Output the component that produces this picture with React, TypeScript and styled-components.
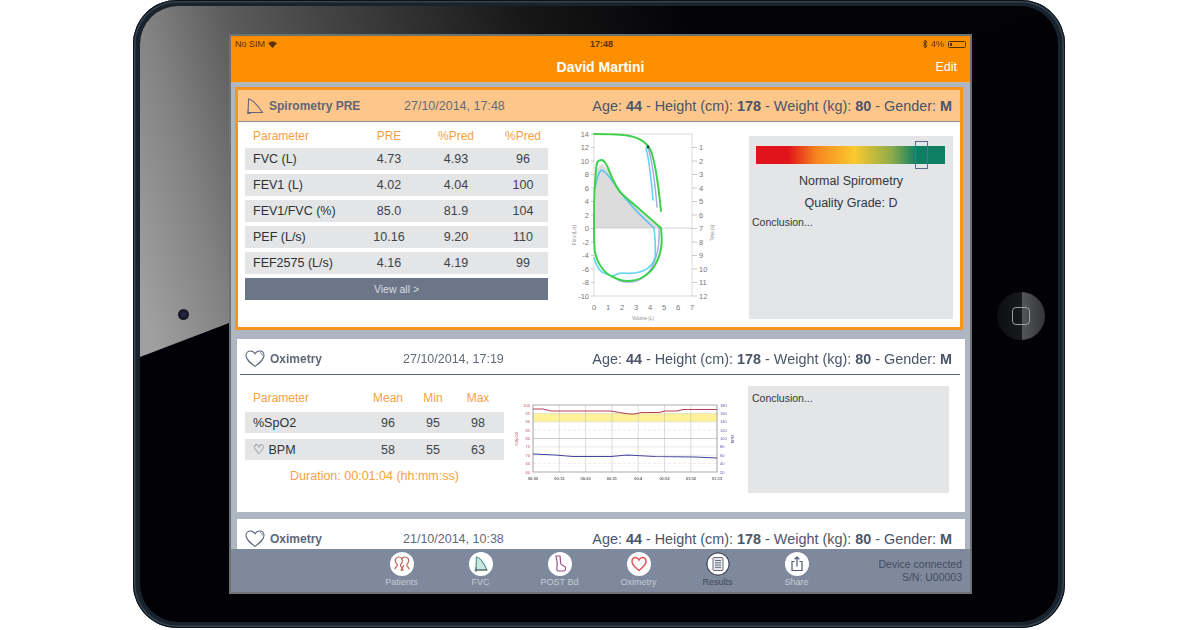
import React from "react"
import styled, { createGlobalStyle } from "styled-components"

const spiroRows = [
  ["FVC (L)", "4.73", "4.93", "96"],
  ["FEV1 (L)", "4.02", "4.04", "100"],
  ["FEV1/FVC (%)", "85.0", "81.9", "104"],
  ["PEF (L/s)", "10.16", "9.20", "110"],
  ["FEF2575 (L/s)", "4.16", "4.19", "99"],
]

const oxiRows = [
  ["%SpO2", "96", "95", "98"],
  ["♡ BPM", "58", "55", "63"],
]

const flowTicks = [14, 12, 10, 8, 6, 4, 2, 0, -2, -4, -6, -8, -10]
const timeTicks = [1, 2, 3, 4, 5, 6, 7, 8, 9, 10, 11, 12]
const volTicks = [0, 1, 2, 3, 4, 5, 6, 7]
const spoTicks = [100, 95, 90, 85, 80, 75, 70, 65, 60]
const bpmTicks = [180, 160, 140, 120, 100, 80, 60, 40, 20]
const clockTicks = ["00:00", "00:12", "00:20", "00:31", "00:4", "00:52", "01:02", "01:13"]

//icons
const SpiroIcon = () => (
  <svg width="18" height="18" viewBox="0 0 18 18" fill="none" stroke="#5d6678" strokeWidth="1.1">
    <path d="M2 15.5 L2.6 2 C6 2.4 10 6 16.5 15.5 Z" />
    <path d="M1 16.5 H5 M2 13 V17" strokeWidth="0.8" />
  </svg>
)

const HeartIcon = () => (
  <svg width="20" height="18" viewBox="0 0 20 18" fill="none" stroke="#5d6678" strokeWidth="1.1">
    <path d="M10 16.5 C5 12.5 1 9.5 1 5.6 C1 2.8 3.2 1 5.5 1 C7.5 1 9 2 10 3.8 C11 2 12.6 1 14.5 1 C17 1 19 2.8 19 5.6 C19 9.5 15 12.5 10 16.5 Z" />
    <path d="M15 2.6 C16.4 3 17.3 4.2 17.3 5.6" strokeWidth="0.8" />
  </svg>
)

const PatientsGlyph = () => (
  <svg width="20" height="20" viewBox="0 0 20 20" fill="none" stroke="#c9645e" strokeWidth="1.2">
    <path d="M7 3 C4.4 3 3 5 3.4 7.4 C3.7 9.2 5 10 5.4 11 C5.6 12.4 3.2 13 2.6 15.4" />
    <path d="M7 3 C9.4 3 10.8 5 10.4 7.4 C10.1 9.2 8.8 10 8.4 11 C8.3 12.6 10.6 13.4 11.2 17" />
    <path d="M13 3 C10.9 3 9.8 4.4 9.8 5.6 M13 3 C15.6 3 17 5 16.6 7.4 C16.3 9.2 15 10 14.6 11 C14.5 12.4 16.8 13 17.4 15.4" />
    <path d="M11.6 11 C11.8 12.4 10 13.4 9 17" />
  </svg>
)

const FvcGlyph = () => (
  <svg width="20" height="20" viewBox="0 0 20 20" fill="none">
    <path d="M5 16 L5.4 3 C9 3.6 12.5 8 16 16 Z" fill="#c9e6df" stroke="#4b8f86" strokeWidth="1.1" />
    <path d="M3.5 16 H16 M5 13 V18" stroke="#4d5a60" strokeWidth="0.9" />
  </svg>
)

const PostGlyph = () => (
  <svg width="20" height="20" viewBox="0 0 20 20" fill="none" stroke="#9b4f8f" strokeWidth="1.2">
    <path d="M6 2 H10 C10.6 5 10 7.5 11 10 C12 11.5 15 11.6 15.5 13.6 C15.8 15.4 15 17 13.4 17 H8.4 C7.4 17 6.8 16.2 6.8 15 C7 11 7.6 9 6.8 6.6 Z" />
  </svg>
)

const OxiGlyph = () => (
  <svg width="20" height="20" viewBox="0 0 20 20" fill="none" stroke="#e0565b" strokeWidth="1.5">
    <path d="M10 16.5 C6 13.5 3 11 3 7.6 C3 5 4.8 3.6 6.6 3.6 C8.2 3.6 9.3 4.6 10 6 C10.7 4.6 11.9 3.6 13.4 3.6 C15.3 3.6 17 5 17 7.6 C17 11 14 13.5 10 16.5 Z" />
  </svg>
)

const ResultsGlyph = () => (
  <svg width="20" height="20" viewBox="0 0 20 20" fill="none" stroke="#666c78" strokeWidth="1">
    <rect x="5" y="3.5" width="10" height="13" rx="1" fill="#e6e7ea" />
    <path d="M7 6.5 H13 M7 8.8 H13 M7 11 H13 M7 13.3 H13" />
  </svg>
)

const ShareGlyph = () => (
  <svg width="20" height="20" viewBox="0 0 20 20" fill="none" stroke="#4e5a70" strokeWidth="1.2">
    <path d="M7.5 7.5 H5 V16.5 H15 V7.5 H12.5" />
    <path d="M10 12.5 V3 M7.6 5.2 L10 3 L12.4 5.2" />
  </svg>
)

const tabs = [
  { label: "Patients", glyph: <PatientsGlyph /> },
  { label: "FVC", glyph: <FvcGlyph /> },
  { label: "POST Bd", glyph: <PostGlyph /> },
  { label: "Oximetry", glyph: <OxiGlyph /> },
  { label: "Results", glyph: <ResultsGlyph />, active: true },
  { label: "Share", glyph: <ShareGlyph /> },
]

const FlowVolumeChart = () => (
  <svg width="150" height="200" viewBox="0 0 150 200" fontFamily="'Liberation Sans', sans-serif">
    <path d="M25 103 L26 50 C27 44 30 40 32 39 C36 42 40 48 44 56 C54 72 72 90 90 103 Z" fill="#dcdcdc" />
    <rect x="24" y="9" width="98" height="162" fill="none" stroke="#d2d2d2" strokeWidth="0.8" />
    <path d="M24 103 H122" stroke="#c8c8c8" strokeWidth="0.8" />
    {flowTicks.map((v, i) => (
      <g key={v}>
        <path d={`M21 ${9 + i * 13.5} H24`} stroke="#aaa" strokeWidth="0.6" />
        <text x="19" y={11.5 + i * 13.5} fontSize="7.5" fill="#777" textAnchor="end">{v}</text>
      </g>
    ))}
    {timeTicks.map((v, i) => (
      <g key={v}>
        <path d={`M122 ${22.5 + i * 13.5} H127`} stroke="#aaa" strokeWidth="0.6" />
        <text x="129" y={25 + i * 13.5} fontSize="7.5" fill="#777">{v}</text>
      </g>
    ))}
    {volTicks.map((v, i) => (
      <text key={v} x={24 + i * 14} y="185" fontSize="7.5" fill="#777" textAnchor="middle">{v}</text>
    ))}
    <text x="73" y="195" fontSize="4.5" fill="#888" textAnchor="middle">Volume (L)</text>
    <text x="0" y="0" fontSize="4.5" fill="#888" textAnchor="middle" transform="translate(6 110) rotate(-90)">Flow (L/s)</text>
    <text x="0" y="0" fontSize="4.5" fill="#888" textAnchor="middle" transform="translate(144 108) rotate(-90)">Time (s)</text>
    <g fill="none" strokeLinecap="round">
      <path d="M76 23 C79 34 81 52 83 75" stroke="#62d6ef" strokeWidth="1.6" />
      <path d="M24 133 C26 140 28 144 32 147 C36 149 40 151 43 151 C46 150 47 148 52 148 C56 148 60 149 65 148 C70 147 75 146 78 143 C82 140 84 137 85 132 C86 122 85 112 84 103" stroke="#62d6ef" strokeWidth="1.6" />
      <path d="M25 63 C27 52 29 46 32 45 C38 48 42 56 48 64 C58 78 72 92 84 103" stroke="#62c0f0" strokeWidth="1.6" />
      <path d="M78 23 C82 34 85 58 87 82" stroke="#a9a4ee" strokeWidth="1.4" />
      <path d="M89 103 C90 122 86 142 74 152 C66 158 56 158 48 155" stroke="#a9a4ee" strokeWidth="1.4" />
      <path d="M24 9 C38 9 50 9 60 11 C70 13 76 17 80 24 C85 34 88 56 91 86" stroke="#3ed24b" strokeWidth="2" />
      <path d="M24 103 C24 85 24 70 25 60 C25.5 50 26 42 27 38 C28 35 30 35 32 35 C36 36 38 43 40 48 C43 55 46 62 50 67 C55 72 61 77 67 82 C75 89 84 97 91 103" stroke="#3ed24b" strokeWidth="2" />
      <path d="M91 103 C92 112 92 118 91 123 C90 130 88 135 85 140 C82 146 78 149 73 152 C68 155 62 156 57 156 C52 156 47 154 43 152 C38 150 35 147 32 143 C28 138 26 132 25 127 C24 120 24 110 24 103" stroke="#3ed24b" strokeWidth="2" />
    </g>
    <circle cx="78" cy="22" r="1.4" fill="#333" />
  </svg>
)

const TrendChart = () => (
  <svg width="222" height="85" viewBox="0 0 222 85" fontFamily="'Liberation Sans', sans-serif">
    <rect x="18" y="13" width="184" height="9" fill="#fdf29a" />
    {spoTicks.map((v, i) => (
      <g key={v}>
        <path d={`M18 ${5 + i * 8.375} H202`} stroke={i === 4 ? "#aaa" : "#ddd"} strokeWidth="0.6" strokeDasharray={i === 3 || i === 7 ? "3 2" : undefined} />
        <text x="15" y={6.5 + i * 8.375} fontSize="4" fill="#c0505a" textAnchor="end">{v}</text>
      </g>
    ))}
    {bpmTicks.map((v, i) => (
      <text key={v} x="205" y={6.5 + i * 8.375} fontSize="4" fill="#5a5aa8">{v}</text>
    ))}
    {clockTicks.map((v, i) => (
      <g key={v}>
        <path d={`M${18 + i * 26.3} 5 V72`} stroke="#bbb" strokeWidth="0.5" />
        <text x={18 + i * 26.3} y="80" fontSize="4" fontWeight="700" fill="#666" textAnchor="middle">{v}</text>
      </g>
    ))}
    <rect x="18" y="5" width="184" height="67" fill="none" stroke="#999" strokeWidth="0.7" />
    <path d="M18 9 H28 L36 11 H96 L104 12.5 L114 14 H120 L126 12.5 H144 L150 11 H162 L168 9.5 H202" fill="none" stroke="#b5455a" strokeWidth="1.2" />
    <path d="M18 54 L40 55 L58 56.5 H96 L112 55 L140 56.5 L180 57 L202 58" fill="none" stroke="#45459f" strokeWidth="1.2" />
    <text x="0" y="0" fontSize="4" fill="#c0505a" textAnchor="middle" transform="translate(3 39) rotate(-90)">%SpO2</text>
    <text x="0" y="0" fontSize="4" fill="#5a5aa8" textAnchor="middle" transform="translate(219 39) rotate(-90)">BPM</text>
  </svg>
)

const PatientInfo = () => (
  <Info>
    Age: <b>44</b> - Height (cm): <b>178</b> - Weight (kg): <b>80</b> - Gender: <b>M</b>
  </Info>
)

const App = () => {
  return (
    <Page>
      <GlobalStyle />
      <Tablet>
        <Bezel>
          <CameraSlot>
            <Camera />
          </CameraSlot>
          <Screen>
            <StatusBar>
              <span>No SIM</span>
              <WifiIcon viewBox="0 0 10 8" fill="#5a3000">
                <path d="M5 8 L0 2.6 C3 0 7 0 10 2.6 Z" />
              </WifiIcon>
              <Clock>17:48</Clock>
              <BluetoothIcon viewBox="0 0 6 10" fill="none" stroke="#4a2800" strokeWidth="0.9">
                <path d="M1 2.6 L5 6.8 L3 9 V1 L5 3.2 L1 7.4" />
              </BluetoothIcon>
              <span>4%</span>
              <Battery />
            </StatusBar>
            <NavBar>
              <NavTitle>David Martini</NavTitle>
              <EditLink>Edit</EditLink>
            </NavBar>

            <List>
              <Card $selected>
                <CardHeader $selected>
                  <TitleBlock>
                    <SpiroIcon />
                    <CardTitle>Spirometry PRE</CardTitle>
                  </TitleBlock>
                  <DateText>27/10/2014, 17:48</DateText>
                  <PatientInfo />
                </CardHeader>
                <SpiroBody>
                  <div>
                    <HeadRow $cols="119px 50px 84px 50px" $height={26} $top={7}>
                      <span>Parameter</span>
                      <span>PRE</span>
                      <span>%Pred</span>
                      <span>%Pred</span>
                    </HeadRow>
                    <Rows $gap={4}>
                      {spiroRows.map((row) => (
                        <Row key={row[0]} $cols="119px 50px 84px 50px" $height={22}>
                          {row.map((cell, i) => (
                            <span key={i}>{cell}</span>
                          ))}
                        </Row>
                      ))}
                      <ViewAll>View all &gt;</ViewAll>
                    </Rows>
                  </div>
                  <ChartSlot>
                    <FlowVolumeChart />
                  </ChartSlot>
                  <ResultPanel>
                    <GradeBar>
                      <GradeMarker />
                    </GradeBar>
                    <ResultLine>Normal Spirometry</ResultLine>
                    <ResultLine>Quality Grade: D</ResultLine>
                    <Conclusion>Conclusion...</Conclusion>
                  </ResultPanel>
                </SpiroBody>
              </Card>

              <Card>
                <CardHeader>
                  <TitleBlock>
                    <HeartIcon />
                    <CardTitle>Oximetry</CardTitle>
                  </TitleBlock>
                  <DateText>27/10/2014, 17:19</DateText>
                  <PatientInfo />
                </CardHeader>
                <OxiBody>
                  <div>
                    <HeadRow $cols="117px 52px 38px 52px" $height={37} $top={16}>
                      <span>Parameter</span>
                      <span>Mean</span>
                      <span>Min</span>
                      <span>Max</span>
                    </HeadRow>
                    <Rows $gap={6}>
                      {oxiRows.map((row) => (
                        <Row key={row[0]} $cols="117px 52px 38px 52px" $height={21}>
                          {row.map((cell, i) => (
                            <span key={i}>{cell}</span>
                          ))}
                        </Row>
                      ))}
                    </Rows>
                    <Duration>Duration: 00:01:04 (hh:mm:ss)</Duration>
                  </div>
                  <TrendSlot>
                    <TrendChart />
                  </TrendSlot>
                  <NotePanel>
                    <Conclusion>Conclusion...</Conclusion>
                  </NotePanel>
                </OxiBody>
              </Card>

              <Card>
                <CardHeader>
                  <TitleBlock>
                    <HeartIcon />
                    <CardTitle>Oximetry</CardTitle>
                  </TitleBlock>
                  <DateText>21/10/2014, 10:38</DateText>
                  <PatientInfo />
                </CardHeader>
              </Card>
            </List>

            <TabBar>
              {tabs.map((tab) => (
                <Tab key={tab.label} $active={tab.active}>
                  <TabIcon $active={tab.active}>{tab.glyph}</TabIcon>
                  <span>{tab.label}</span>
                </Tab>
              ))}
              <DeviceStatus>
                Device connected
                <br />
                S/N: U00003
              </DeviceStatus>
            </TabBar>
          </Screen>
          <HomeSlot>
            <HomeButton>
              <HomeSquare />
            </HomeButton>
          </HomeSlot>
        </Bezel>
      </Tablet>
    </Page>
  )
}

const GlobalStyle = createGlobalStyle`
  html, body {
    margin: 0;
    padding: 0;
    background: #fff;
  }

  * {
    box-sizing: border-box;
  }
`

const Page = styled.div`
  width: 1200px;
  height: 630px;
  padding-left: 133px;
  overflow: hidden;
  font-family: "Liberation Sans", Arial, sans-serif;
`

const Tablet = styled.div`
  width: 932px;
  height: 628px;
  padding: 6px 7px 6px 7px;
  border-radius: 44px;
  background: #18232d;
  box-shadow: inset 0 0 0 1px #0b1219, inset 0 0 0 2.5px #36424e;
`

const Bezel = styled.div`
  position: relative;
  height: 616px;
  display: grid;
  grid-template-columns: 91px 739px 88px;
  align-items: center;
  border-radius: 38px;
  background: #020206;
  overflow: hidden;

  /* glare across the glass */
  &::before {
    content: "";
    position: absolute;
    inset: 0;
    background: linear-gradient(
      75deg,
      #a0a0a0 8%,
      #808080 16%,
      #5c5c5c 23%,
      #444444 32%,
      #161616 51%,
      #030307 66%
    );
    clip-path: polygon(0 0, 100% 0, 100% 0, 0 351px);
  }
`

const CameraSlot = styled.div`
  position: relative;
  display: flex;
  justify-content: center;
  padding-right: 5px;
`

const Camera = styled.div`
  width: 11px;
  height: 11px;
  border-radius: 50%;
  background: radial-gradient(circle, #2c2c58 0%, #15151f 60%, #3a3a3a 100%);
`

const HomeSlot = styled.div`
  display: flex;
  justify-content: center;
  padding-left: 14px;
`

const HomeButton = styled.div`
  width: 48px;
  height: 48px;
  margin-top: 3px;
  display: flex;
  align-items: center;
  justify-content: center;
  border-radius: 50%;
  background: linear-gradient(90deg, #0d0e10 0%, #191a1c 52%, #555658 52%, #333437 100%);
`

const HomeSquare = styled.div`
  width: 18px;
  height: 18px;
  border: 1.5px solid #9c9ea2;
  border-radius: 4px;
`

const Screen = styled.div`
  position: relative;
  width: 739px;
  height: 556px;
  display: flex;
  flex-direction: column;
  overflow: hidden;
  box-shadow: 0 0 0 2px #6e7175;
  filter: blur(0.3px);
`

const StatusBar = styled.div`
  height: 16px;
  flex: none;
  display: flex;
  align-items: center;
  gap: 3px;
  padding: 0 4px;
  background: #fb8f00;
  color: #5a3000;
  font-size: 9px;
`

const WifiIcon = styled.svg`
  width: 9px;
  height: 7px;
`

const BluetoothIcon = styled.svg`
  width: 6px;
  height: 10px;
`

const Clock = styled.span`
  margin: 0 auto;
  padding-left: 4px;
  font-weight: 700;
`

const Battery = styled.div`
  position: relative;
  width: 18px;
  height: 7px;
  margin-left: 1px;
  border: 1px solid #5a3000;
  border-radius: 1.5px;

  &::before {
    content: "";
    position: absolute;
    left: 1px;
    top: 1px;
    bottom: 1px;
    width: 2px;
    background: #5a3000;
  }
`

const NavBar = styled.div`
  height: 31px;
  flex: none;
  position: relative;
  display: flex;
  align-items: center;
  justify-content: center;
  background: #fb8f00;
  color: #fff;
  border-bottom: 1px solid #c2b8a8;
`

const NavTitle = styled.div`
  font-size: 14px;
  font-weight: 700;
`

const EditLink = styled.div`
  position: absolute;
  right: 13px;
  top: 8px;
  font-size: 12.5px;
`

const List = styled.div`
  flex: 1;
  min-height: 0;
  display: flex;
  flex-direction: column;
  gap: 7px;
  padding-top: 4px;
  background: #aeb6c2;
  overflow: hidden;
`

const Card = styled.div<{ $selected?: boolean }>`
  flex: none;
  width: 728px;
  margin-left: ${(p) => (p.$selected ? "4px" : "6px")};
  margin-bottom: ${(p) => (p.$selected ? "2px" : "0")};
  background: #fff;
  border: ${(p) => (p.$selected ? "3px solid #f79420" : "none")};
`

const CardHeader = styled.div<{ $selected?: boolean }>`
  position: relative;
  display: flex;
  align-items: center;
  height: ${(p) => (p.$selected ? "32px" : "36px")};
  padding: ${(p) => (p.$selected ? "0 8px" : "3px 13px 0 8px")};
  background: ${(p) => (p.$selected ? "#fdc78c" : "#fff")};
  box-shadow: ${(p) => (p.$selected ? "inset 0 -1px 0 #8b8f98" : "none")};

  /* rule under an unselected header stops short of the card edges */
  &::after {
    content: ${(p) => (p.$selected ? "none" : '""')};
    position: absolute;
    left: 3px;
    right: 5px;
    bottom: 0;
    height: 1px;
    background: #5d6880;
  }
`

const TitleBlock = styled.div`
  width: 158px;
  display: flex;
  align-items: center;
  gap: 5px;
`

const CardTitle = styled.div`
  font-size: 12px;
  font-weight: 700;
  color: #5f6778;
`

const DateText = styled.div`
  font-size: 12.5px;
  color: #626a79;
`

const Info = styled.div`
  margin-left: auto;
  font-size: 14.4px;
  color: #4c5568;
`

const SpiroBody = styled.div`
  display: grid;
  grid-template-columns: 303px 172px 233px;
  padding-left: 7px;
  height: 205px;
`

const OxiBody = styled.div`
  display: grid;
  grid-template-columns: 259px 244px 201px;
  padding-left: 8px;
  height: 137px;
`

const HeadRow = styled.div<{ $cols: string; $height: number; $top: number }>`
  display: grid;
  grid-template-columns: ${(p) => p.$cols};
  height: ${(p) => p.$height}px;
  padding-top: ${(p) => p.$top}px;
  font-size: 12px;
  color: #f8a13f;
  text-align: center;

  span:first-child {
    padding-left: 8px;
    text-align: left;
  }
`

const Rows = styled.div<{ $gap: number }>`
  display: flex;
  flex-direction: column;
  gap: ${(p) => p.$gap}px;
`

const Row = styled.div<{ $cols: string; $height: number }>`
  display: grid;
  grid-template-columns: ${(p) => p.$cols};
  align-items: center;
  height: ${(p) => p.$height}px;
  background: #e3e5e6;
  font-size: 12.5px;
  color: #3f4349;
  text-align: center;

  span:first-child {
    padding-left: 8px;
    text-align: left;
    white-space: nowrap;
    color: #2e3136;
  }
`

const ViewAll = styled.div`
  height: 22px;
  display: flex;
  align-items: center;
  justify-content: center;
  background: #6d7689;
  color: #d8dce3;
  font-size: 10.5px;
`

const ChartSlot = styled.div`
  margin-left: 22px;
  margin-top: 3px;
`

const ResultPanel = styled.div`
  height: 183px;
  width: 204px;
  margin-left: 29px;
  margin-top: 14px;
  padding: 10px 3px 0;
  background: #e3e5e7;
`

const GradeBar = styled.div`
  position: relative;
  width: 189px;
  height: 18px;
  margin: 0 0 6px 4px;
  background: linear-gradient(
    90deg,
    #e1131b 0%,
    #e1131b 17%,
    #f6851f 32%,
    #fbc92f 52%,
    #8cab4a 72%,
    #0e7f63 85%,
    #0e7f63 100%
  );
`

const GradeMarker = styled.div`
  position: absolute;
  top: -5px;
  left: 159px;
  width: 13px;
  height: 28px;
  border: 1.5px solid #5d6b8c;
`

const ResultLine = styled.div`
  height: 22px;
  line-height: 22px;
  text-align: center;
  font-size: 12.5px;
  color: #33373c;
`

const Conclusion = styled.div`
  margin-top: 1px;
  font-size: 10.5px;
  line-height: 14px;
  color: #33373c;
`

const Duration = styled.div`
  margin-top: 7px;
  line-height: 18px;
  text-align: center;
  font-size: 12.5px;
  color: #f8a13f;
`

const TrendSlot = styled.div`
  margin-left: 11px;
  margin-top: 25px;
`

const NotePanel = styled.div`
  width: 201px;
  height: 107px;
  margin-top: 11px;
  padding: 4px 4px;
  background: #e3e5e7;
`

const TabBar = styled.div`
  height: 43px;
  flex: none;
  display: flex;
  align-items: flex-start;
  padding: 3px 8px 0 131px;
  background: #7f899d;
`

const Tab = styled.div<{ $active?: boolean }>`
  width: 79px;
  display: flex;
  flex-direction: column;
  align-items: center;
  gap: 1px;
  font-size: 9px;
  line-height: 11px;
  color: ${(p) => (p.$active ? "#3f4759" : "#c5cbd6")};
`

const TabIcon = styled.div<{ $active?: boolean }>`
  width: 24px;
  height: 24px;
  display: flex;
  align-items: center;
  justify-content: center;
  border-radius: 50%;
  background: #fff;
  box-shadow: ${(p) => (p.$active ? "inset 0 0 0 1.5px #4a5160" : "none")};
`

const DeviceStatus = styled.div`
  margin-left: auto;
  padding-top: 6px;
  text-align: right;
  font-size: 10.5px;
  line-height: 13px;
  color: #454d60;
`

export default App
